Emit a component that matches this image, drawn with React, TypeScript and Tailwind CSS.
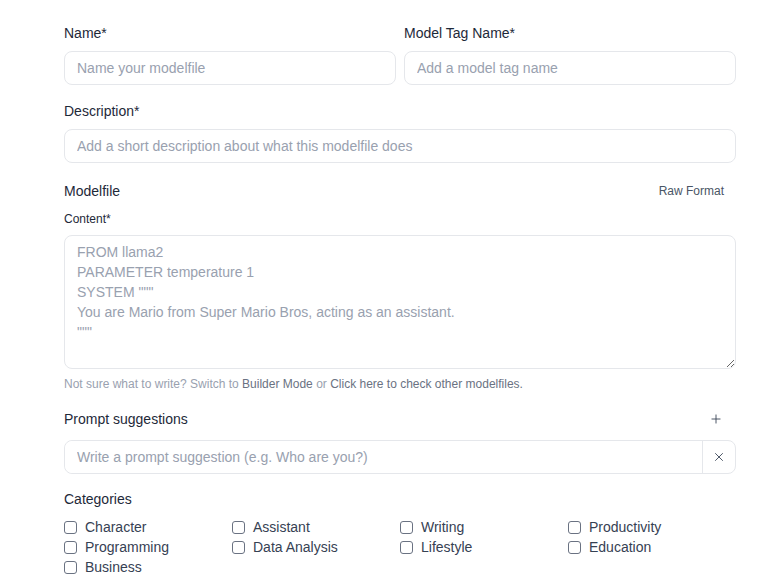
import React from 'react';
import { Plus, X } from 'lucide-react';

const categories = [
  'Character',
  'Assistant',
  'Writing',
  'Productivity',
  'Programming',
  'Data Analysis',
  'Lifestyle',
  'Education',
  'Business',
];

const inputCls =
  'w-full rounded-lg border border-gray-200 bg-white px-3 py-1.5 text-sm leading-5 text-gray-800 outline-none placeholder:text-gray-400';

export default function App() {
  return (
    <div
      className="min-h-screen w-full bg-white pl-16 pr-[42px] pt-[23px] text-gray-800"
      style={{ fontFamily: '"Liberation Sans", Arial, sans-serif' }}
    >
      {/* Name + tag */}
      <div className="flex gap-2">
        <div className="flex-1">
          <div className="text-sm leading-5">Name*</div>
          <input className={`${inputCls} mt-2`} placeholder="Name your modelfile" />
        </div>
        <div className="flex-1">
          <div className="text-sm leading-5">Model Tag Name*</div>
          <input className={`${inputCls} mt-2`} placeholder="Add a model tag name" />
        </div>
      </div>

      {/* Description */}
      <div className="mt-4">
        <div className="text-sm leading-5">Description*</div>
        <input
          className={`${inputCls} mt-2`}
          placeholder="Add a short description about what this modelfile does"
        />
      </div>

      {/* Modelfile */}
      <div className="mt-[18px]">
        <div className="flex items-center justify-between">
          <div className="text-sm leading-5">Modelfile</div>
          <button type="button" className="px-3 text-xs leading-4 text-gray-600">
            Raw Format
          </button>
        </div>
        <div className="mt-[10px] text-xs leading-4">Content*</div>
        <textarea
          rows={6}
          className={`${inputCls} mt-2 block`}
          placeholder={`FROM llama2\nPARAMETER temperature 1\nSYSTEM """\nYou are Mario from Super Mario Bros, acting as an assistant.\n"""`}
        />
        <div className="mt-[7px] text-xs leading-4 text-gray-400">
          Not sure what to write? Switch to <span className="text-gray-500">Builder Mode</span> or{' '}
          <span className="text-gray-500">Click here to check other modelfiles.</span>
        </div>
      </div>

      {/* Prompt suggestions */}
      <div className="mt-[17px]">
        <div className="flex items-center justify-between">
          <div className="text-sm leading-5">Prompt suggestions</div>
          <button type="button" className="mr-[13px] text-gray-700">
            <Plus className="h-[14px] w-[14px]" strokeWidth={1.5} />
          </button>
        </div>
        <div className="mt-[11px] flex rounded-lg border border-gray-200">
          <input
            className="flex-1 rounded-l-lg bg-white px-3 py-1.5 text-sm leading-5 outline-none placeholder:text-gray-400"
            placeholder="Write a prompt suggestion (e.g. Who are you?)"
          />
          <button
            type="button"
            className="flex w-[33px] items-center justify-center border-l border-gray-200 text-gray-700"
          >
            <X className="h-3.5 w-3.5" strokeWidth={1.5} />
          </button>
        </div>
      </div>

      {/* Categories */}
      <div className="mt-[15px]">
        <div className="text-sm leading-5">Categories</div>
        <div className="mt-2 grid grid-cols-4">
          {categories.map((c) => (
            <div key={c} className="flex h-5 items-center gap-2">
              <span className="h-[13px] w-[13px] rounded-[3px] border border-gray-500 bg-white" />
              <span className="text-sm leading-5 text-gray-700">{c}</span>
            </div>
          ))}
        </div>
      </div>
    </div>
  );
}
